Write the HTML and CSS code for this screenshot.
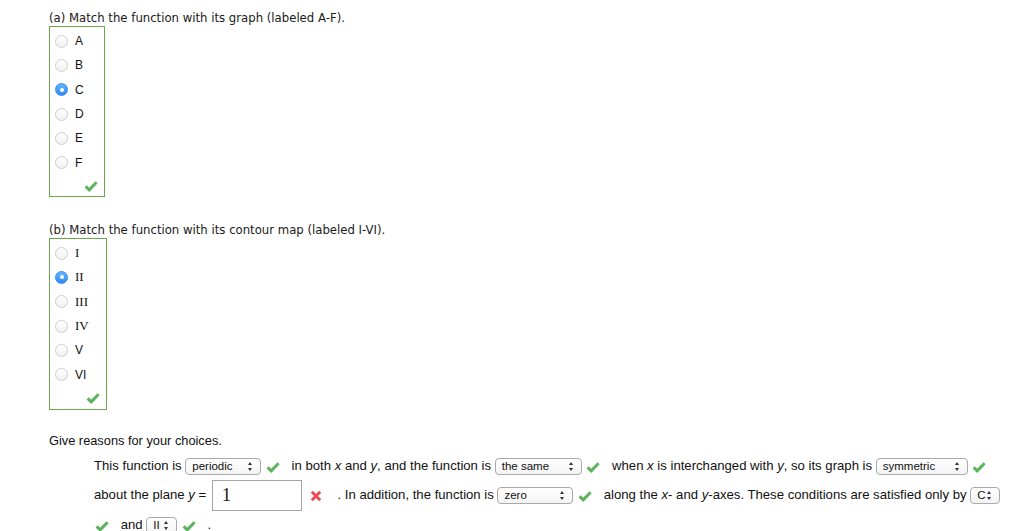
FILE: index.html
```html
<!DOCTYPE html>
<html>
<head>
<meta charset="utf-8">
<link rel="stylesheet" href="styles.css">
</head>
<body>
<div class="page">
  <div class="q">(a) Match the function with its graph (labeled A-F).</div>
  <div class="box box-a">
    <div class="opt"><span class="radio"></span><span class="lab">A</span></div>
    <div class="opt"><span class="radio"></span><span class="lab">B</span></div>
    <div class="opt"><span class="radio on"></span><span class="lab">C</span></div>
    <div class="opt"><span class="radio"></span><span class="lab">D</span></div>
    <div class="opt"><span class="radio"></span><span class="lab">E</span></div>
    <div class="opt"><span class="radio"></span><span class="lab">F</span></div>
    <div class="mark"><svg class="ck" viewBox="0 0 14 12" width="14" height="12"><path d="M1.6 6.4 L5.2 9.8 L12.6 2.2" fill="none" stroke="#5bb45a" stroke-width="3"/></svg></div>
  </div>

  <div class="q q-b">(b) Match the function with its contour map (labeled I-VI).</div>
  <div class="box box-b">
    <div class="opt"><span class="radio"></span><span class="lab serif">I</span></div>
    <div class="opt"><span class="radio on"></span><span class="lab serif">II</span></div>
    <div class="opt"><span class="radio"></span><span class="lab serif">III</span></div>
    <div class="opt"><span class="radio"></span><span class="lab serif">IV</span></div>
    <div class="opt"><span class="radio"></span><span class="lab">V</span></div>
    <div class="opt"><span class="radio"></span><span class="lab">VI</span></div>
    <div class="mark"><svg class="ck" viewBox="0 0 14 12" width="14" height="12"><path d="M1.6 6.4 L5.2 9.8 L12.6 2.2" fill="none" stroke="#5bb45a" stroke-width="3"/></svg></div>
  </div>

  <div class="give">Give reasons for your choices.</div>
  <div class="reasons">This function is <span class="sel w76">periodic<span class="arr"></span></span> <svg class="ok" viewBox="0 0 14 12" width="14" height="12"><path d="M1.6 6.4 L5.2 9.8 L12.6 2.2" fill="none" stroke="#5bb45a" stroke-width="3"/></svg> in both <i>x</i> and <i>y</i>, and the function is <span class="sel w87">the same<span class="arr"></span></span> <svg class="ok" viewBox="0 0 14 12" width="14" height="12"><path d="M1.6 6.4 L5.2 9.8 L12.6 2.2" fill="none" stroke="#5bb45a" stroke-width="3"/></svg> when <i>x</i> is interchanged with <i>y</i>, so its graph is <span class="sel w92">symmetric<span class="arr"></span></span> <svg class="ok" viewBox="0 0 14 12" width="14" height="12"><path d="M1.6 6.4 L5.2 9.8 L12.6 2.2" fill="none" stroke="#5bb45a" stroke-width="3"/></svg> about the plane <i>y</i> = <span class="inp">1</span><svg class="bad" viewBox="0 0 12 12" width="12" height="12"><path d="M1.8 1.8 L10.2 10.2 M10.2 1.8 L1.8 10.2" fill="none" stroke="#ea4a51" stroke-width="3"/></svg> . In addition, the function is <span class="sel w76">zero<span class="arr"></span></span> <svg class="ok" viewBox="0 0 14 12" width="14" height="12"><path d="M1.6 6.4 L5.2 9.8 L12.6 2.2" fill="none" stroke="#5bb45a" stroke-width="3"/></svg> along the <i>x</i>- and <i>y</i>-axes. These conditions are satisfied only by <span class="sel w30">C<span class="arr"></span></span> <svg class="ok" viewBox="0 0 14 12" width="14" height="12"><path d="M1.6 6.4 L5.2 9.8 L12.6 2.2" fill="none" stroke="#5bb45a" stroke-width="3"/></svg> and <span class="sel w31">II<span class="arr"></span></span> <svg class="ok" viewBox="0 0 14 12" width="14" height="12"><path d="M1.6 6.4 L5.2 9.8 L12.6 2.2" fill="none" stroke="#5bb45a" stroke-width="3"/></svg> .</div>
</div>
</body>
</html>
```

FILE: styles.css
```css
html, body {
  margin: 0;
  padding: 0;
  background: #fff;
}

.page {
  padding: 11px 18px 0 49px;
  color: #000;
}

.q {
  font-family: "DejaVu Sans", Verdana, sans-serif;
  font-size: 11.7px;
  line-height: 15px;
  height: 15px;
  color: #1a1a1a;
}

.q-b {
  margin-top: 26px;
}

.box {
  border: 1px solid #6aa84f;
  box-sizing: border-box;
  padding-top: 2px;
}

.box-a {
  width: 56px;
  height: 171px;
}

.box-b {
  width: 58px;
  height: 172px;
}

.opt {
  display: flex;
  align-items: center;
  height: 24.3px;
  padding-left: 5px;
}

.radio {
  width: 13px;
  height: 13px;
  box-sizing: border-box;
  border-radius: 50%;
  border: 1px solid #cfcfcf;
  background: linear-gradient(#ffffff, #f1f1f1);
  flex: none;
  display: flex;
  align-items: center;
  justify-content: center;
}

.radio.on {
  border-color: #2f8cf2;
  background: linear-gradient(#68b1fb, #2c8bf4);
}

.radio.on::after {
  content: "";
  width: 4px;
  height: 4px;
  border-radius: 50%;
  background: #fff;
}

.lab {
  margin-left: 7px;
  font-family: "Liberation Sans", Arial, sans-serif;
  font-size: 12px;
  color: #111;
}

.lab.serif {
  font-family: "Liberation Serif", "Times New Roman", serif;
  font-size: 13px;
}

.mark {
  height: 22px;
  display: flex;
  align-items: center;
  justify-content: flex-end;
  padding-right: 6px;
}

.ck {
  display: block;
}

.give {
  margin-top: 23px;
  font-family: "Liberation Sans", Arial, sans-serif;
  font-size: 12.8px;
  line-height: 16px;
  color: #111;
}

.reasons {
  margin-top: 3px;
  padding-left: 45px;
  font-family: "Liberation Sans", Arial, sans-serif;
  font-size: 13.15px;
  line-height: 28px;
  color: #111;
}

.reasons i {
  font-style: italic;
}

.sel {
  display: inline-block;
  position: relative;
  box-sizing: border-box;
  height: 17px;
  line-height: 15px;
  border: 1px solid #a9a9a9;
  border-radius: 4px;
  background: linear-gradient(#ffffff, #f4f4f4);
  font-size: 11.5px;
  padding-left: 6px;
  vertical-align: middle;
  color: #111;
}

.w76 { width: 76px; }
.w87 { width: 87px; }
.w92 { width: 92px; }
.w30 { width: 30px; }
.w31 { width: 31px; }

.arr {
  position: absolute;
  right: 7px;
  top: 3px;
  width: 5px;
  height: 9px;
}

.arr::before,
.arr::after {
  content: "";
  position: absolute;
  left: 0;
  border-left: 2.5px solid transparent;
  border-right: 2.5px solid transparent;
}

.arr::before {
  top: 0;
  border-bottom: 3.5px solid #333;
}

.arr::after {
  bottom: 0;
  border-top: 3.5px solid #333;
}

.ok {
  display: inline-block;
  vertical-align: middle;
  margin-left: 1px;
  margin-right: 8px;
}

.inp {
  display: inline-block;
  box-sizing: border-box;
  width: 90px;
  height: 31px;
  border: 1px solid #a5a5a5;
  vertical-align: middle;
  font-family: "Liberation Serif", "Times New Roman", serif;
  font-size: 19px;
  line-height: 28px;
  padding-left: 9px;
  margin-left: 2px;
  color: #222;
}

.bad {
  display: inline-block;
  vertical-align: middle;
  margin-left: 8px;
  margin-right: 12px;
}
```
